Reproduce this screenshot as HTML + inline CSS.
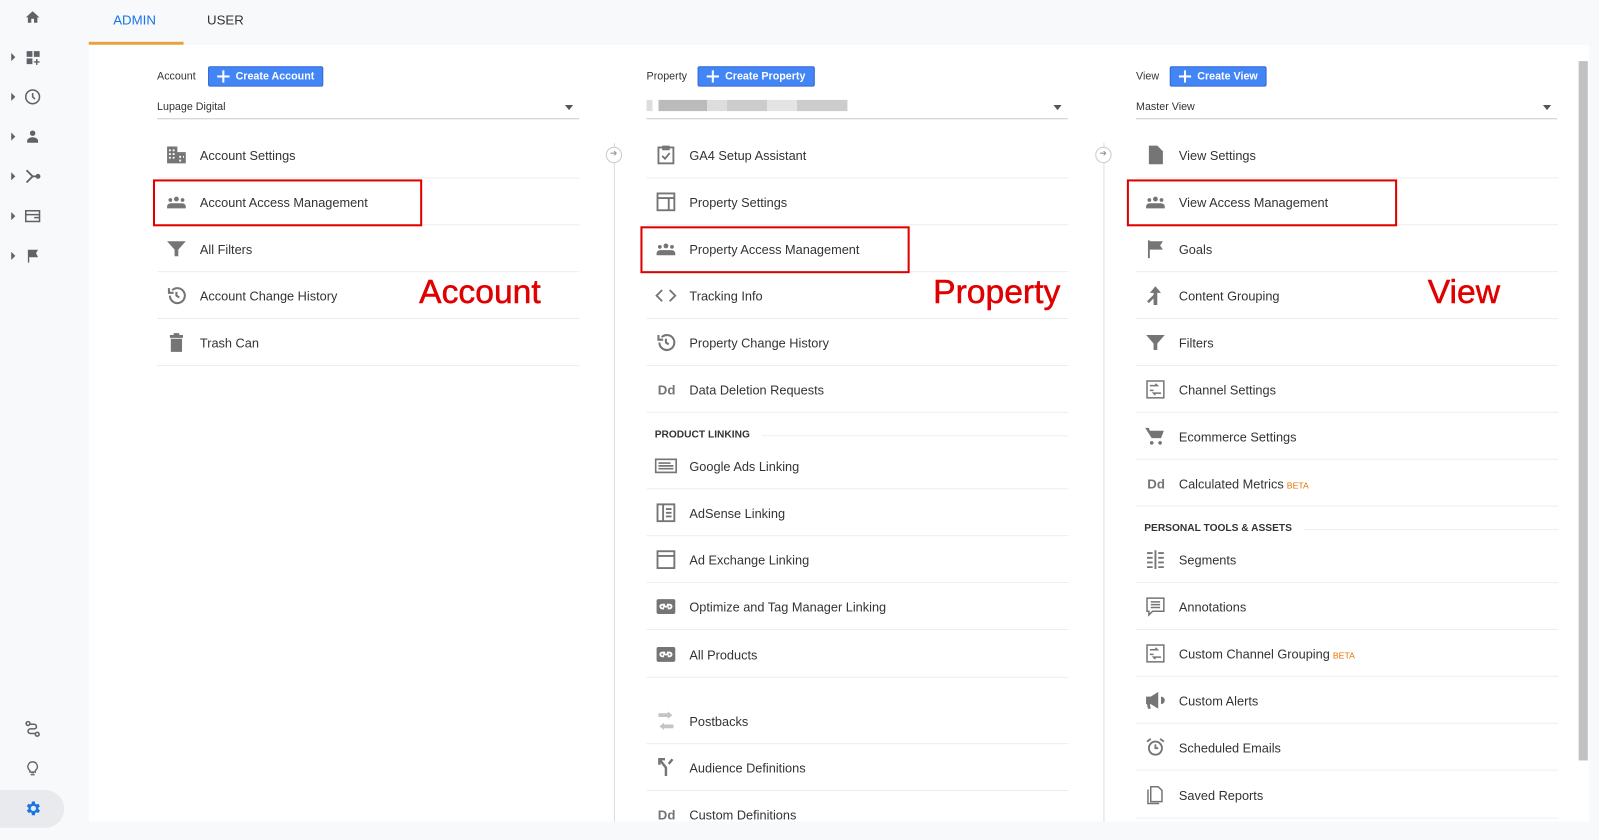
<!DOCTYPE html>
<html><head><meta charset="utf-8">
<style>
*{margin:0;padding:0;box-sizing:border-box}
html,body{width:1599px;height:840px;overflow:hidden;background:#f1f3f4;font-family:"Liberation Sans",Arial,sans-serif}
#w{position:absolute;left:0;top:0;width:1568px;height:824px;transform:scale(1.0198,1.0194);transform-origin:0 0;background:#f8f9fa}
.a{position:absolute}
.side{left:0;top:0;width:87px;height:824px;background:#f8f9fa}
.tri{position:absolute;left:11px;width:0;height:0;border-left:4px solid #5f6368;border-top:4px solid transparent;border-bottom:4px solid transparent}
.panel{left:87px;top:44px;width:1471px;height:762px;background:#fff}
.lbl{font-size:10.5px;color:#333}
.btn{height:20px;background:#4285f4;border:1px solid #3367d6;border-radius:2px;color:#fff;font-weight:bold;font-size:10.5px;line-height:18px;padding-left:26px;padding-right:8px}
.btn:before{content:"";position:absolute;left:8px;top:8px;width:12px;height:2px;background:#fff}
.btn:after{content:"";position:absolute;left:13px;top:3px;width:2px;height:12px;background:#fff}
.dd{font-size:10.5px;color:#333;border-bottom:1px solid #ccc;height:20px;padding-top:2px}
.dd i{position:absolute;right:6px;top:6px;border-top:5px solid #555;border-left:4px solid transparent;border-right:4px solid transparent}
.row{position:absolute;height:46px;border-bottom:1px solid #eee;font-size:12.5px;color:#333;line-height:48px;padding-left:42px;width:414px}
.row svg{position:absolute;left:8px;top:12px;width:22px;height:22px;fill:#757575}
.beta{font-size:8.5px;color:#e37400;margin-left:3px}
.sec{position:absolute;font-size:10px;font-weight:bold;color:#333;width:406px}
.sec span{background:#fff;padding-right:12px;position:relative;z-index:1}
.sec:after{content:"";position:absolute;left:0;right:0;top:6px;height:1px;background:#eee;z-index:0}
.vl{width:1px;background:#ddd;top:140px;height:666px}
.circ{width:16px;height:16px;border:1px solid #ccc;border-radius:50%;background:#fff;top:144px}
.circ:after{content:"➜";position:absolute;left:3px;top:0px;font-size:9px;color:#999}
.red{border:2px solid #e00000}
.big{color:#e00000;font-size:33px;-webkit-text-stroke:0.5px #e00000}
</style></head><body><div id="w">
<div class="a side">
<svg class="a" style="left:24px;top:9px" width="16" height="16" viewBox="0 0 24 24" fill="#5f6368"><path d="M10 20v-6h4v6h5v-8h3L12 3 2 12h3v8z"/></svg>
<i class="tri" style="top:52px"></i>
<svg class="a" style="left:24px;top:48px" width="17" height="17" viewBox="0 0 24 24" fill="#5f6368"><path d="M3 3h8v8H3zM13 3h8v8h-8zM3 13h8v8H3zM16 14h2v3h3v2h-3v3h-2v-3h-3v-2h3z"/></svg>
<i class="tri" style="top:91px"></i>
<svg class="a" style="left:23px;top:86px" width="18" height="18" viewBox="0 0 24 24" fill="none" stroke="#5f6368" stroke-width="2"><circle cx="12" cy="12" r="9"/><path d="M12 7v5l3 3"/></svg>
<i class="tri" style="top:130px"></i>
<svg class="a" style="left:24px;top:126px" width="16" height="16" viewBox="0 0 24 24" fill="#5f6368"><circle cx="12" cy="7" r="4"/><path d="M4 21v-3c0-3 5-5 8-5s8 2 8 5v3z"/></svg>
<i class="tri" style="top:169px"></i>
<svg class="a" style="left:23px;top:164px" width="18" height="18" viewBox="0 0 24 24" fill="none" stroke="#5f6368" stroke-width="2.4"><path d="M4 4l8 8-8 8M12 12h7"/><circle cx="19" cy="12" r="2" fill="#5f6368"/></svg>
<i class="tri" style="top:208px"></i>
<svg class="a" style="left:23px;top:203px" width="18" height="18" viewBox="0 0 24 24" fill="none" stroke="#5f6368" stroke-width="2"><rect x="3" y="5" width="18" height="14"/><path d="M3 10h18M14 14h7"/></svg>
<i class="tri" style="top:247px"></i>
<svg class="a" style="left:24px;top:243px" width="16" height="16" viewBox="0 0 24 24" fill="#5f6368"><path d="M5 3h2v19H5zM7 3h13l-3 5 3 6H7z"/></svg>
<svg class="a" style="left:23px;top:706px" width="18" height="18" viewBox="0 0 24 24" fill="none" stroke="#5f6368" stroke-width="2"><circle cx="6" cy="5" r="2.5"/><circle cx="18" cy="19" r="2.5"/><path d="M8 6h6a3 3 0 0 1 0 6H9a3 3 0 0 0 0 6h6"/></svg>
<svg class="a" style="left:24px;top:745px" width="16" height="18" viewBox="0 0 24 24" fill="none" stroke="#5f6368" stroke-width="2"><path d="M9 21h6M10 18h4M12 2a7 7 0 0 0-4 12.7V17h8v-2.3A7 7 0 0 0 12 2z"/></svg>
<div class="a" style="left:0;top:775px;width:63px;height:37px;background:#e8eaed;border-radius:0 19px 19px 0"></div>
<svg class="a" style="left:23px;top:784px" width="18" height="18" viewBox="0 0 24 24" fill="#1a73e8"><path d="M19.4 13a7.5 7.5 0 0 0 0-2l2.1-1.6-2-3.5-2.5 1a7 7 0 0 0-1.7-1L15 3h-4l-.4 2.9a7 7 0 0 0-1.7 1l-2.5-1-2 3.5L6.6 11a7.5 7.5 0 0 0 0 2l-2.1 1.6 2 3.5 2.5-1a7 7 0 0 0 1.7 1L11 21h4l.4-2.9a7 7 0 0 0 1.7-1l2.5 1 2-3.5zM13 15.5a3.5 3.5 0 1 1 0-7 3.5 3.5 0 0 1 0 7z"/></svg>
</div>
<div class="a" style="left:111px;top:12px;font-size:13px;color:#1a73e8">ADMIN</div>
<div class="a" style="left:203px;top:12px;font-size:13px;color:#333">USER</div>
<div class="a" style="left:87px;top:41px;width:93px;height:3px;background:#e8a33d"></div>
<div class="a panel"></div>
<div class="a" style="left:1548px;top:60px;width:9px;height:686px;background:#c1c1c1"></div>

<div class="a lbl" style="left:154px;top:69px">Account</div>
<div class="a btn" style="left:204px;top:65px">Create Account</div>
<div class="a dd" style="left:154px;top:97px;width:414px">Lupage Digital<i></i></div>
<div class="a lbl" style="left:634px;top:69px">Property</div>
<div class="a btn" style="left:684px;top:65px">Create Property</div>
<div class="a dd" style="left:634px;top:97px;width:413px"><div class="a" style="left:0;top:1px;width:197px;height:11px;background:linear-gradient(90deg,#ddd 0 3%,#fff 3% 6%,#bbb 6% 30%,#ddd 30% 40%,#ccc 40% 60%,#e4e4e4 60% 75%,#ccc 75% 100%)"></div><i></i></div>
<div class="a lbl" style="left:1114px;top:69px">View</div>
<div class="a btn" style="left:1147px;top:65px">Create View</div>
<div class="a dd" style="left:1114px;top:97px;width:413px">Master View<i></i></div>

<div class="a vl" style="left:602px"></div><div class="a circ" style="left:594px"></div>
<div class="a vl" style="left:1082px"></div><div class="a circ" style="left:1074px"></div>

<!-- Account column -->
<div class="row" style="left:154px;top:129px"><svg viewBox="0 0 24 24"><path d="M2 3h11v18H2zM13 9h9v12h-9z"/><path fill="#fff" d="M4 6h2v2H4zM8 6h2v2H8zM4 10h2v2H4zM8 10h2v2H8zM4 14h2v2H4zM8 14h2v2H8zM15 13h2v2h-2zM19 13h1v2h-1zM15 17h2v2h-2z"/></svg>Account Settings</div>
<div class="row" style="left:154px;top:175px"><svg viewBox="0 0 24 24"><circle cx="12" cy="9" r="2.6"/><circle cx="5.5" cy="10" r="2"/><circle cx="18.5" cy="10" r="2"/><path d="M2 17c0-2 2-3.5 4-3.5h12c2 0 4 1.5 4 3.5v2H2z"/></svg>Account Access Management</div>
<div class="row" style="left:154px;top:221px"><svg viewBox="0 0 24 24"><path d="M2 4h20l-8 9v7h-4v-7z"/></svg>All Filters</div>
<div class="row" style="left:154px;top:267px"><svg viewBox="0 0 24 24" style="fill:none" stroke="#757575" stroke-width="2.2"><path d="M5 12a8 8 0 1 0 2.5-5.8"/><path d="M4 4v5h5"/><path d="M12 8v4l3 2"/></svg>Account Change History</div>
<div class="row" style="left:154px;top:313px"><svg viewBox="0 0 24 24"><path d="M5 4h14v3H5zM9 2h6v2H9zM6 8h12v14H6z"/></svg>Trash Can</div>
<div class="a red" style="left:150px;top:176px;width:264px;height:46px"></div>
<div class="a big" style="left:411px;top:267px">Account</div>

<!-- Property column -->
<div class="row" style="left:634px;top:129px"><svg viewBox="0 0 24 24" style="fill:none" stroke="#757575" stroke-width="2"><rect x="4" y="4" width="16" height="17"/><path d="M9 3h6v3H9zM8 13l3 3 5-6"/></svg>GA4 Setup Assistant</div>
<div class="row" style="left:634px;top:175px"><svg viewBox="0 0 24 24" style="fill:none" stroke="#757575" stroke-width="2"><rect x="3" y="3" width="18" height="18"/><path d="M3 8h18M15 8v13"/></svg>Property Settings</div>
<div class="row" style="left:634px;top:221px"><svg viewBox="0 0 24 24"><circle cx="12" cy="9" r="2.6"/><circle cx="5.5" cy="10" r="2"/><circle cx="18.5" cy="10" r="2"/><path d="M2 17c0-2 2-3.5 4-3.5h12c2 0 4 1.5 4 3.5v2H2z"/></svg>Property Access Management</div>
<div class="row" style="left:634px;top:267px"><svg viewBox="0 0 24 24" style="fill:none" stroke="#757575" stroke-width="2"><path d="M8 6l-6 6 6 6M16 6l6 6-6 6"/></svg>Tracking Info</div>
<div class="row" style="left:634px;top:313px"><svg viewBox="0 0 24 24" style="fill:none" stroke="#757575" stroke-width="2.2"><path d="M5 12a8 8 0 1 0 2.5-5.8"/><path d="M4 4v5h5"/><path d="M12 8v4l3 2"/></svg>Property Change History</div>
<div class="row" style="left:634px;top:359px"><span style="position:absolute;left:11px;font-weight:bold;color:#757575;font-size:13px">Dd</span>Data Deletion Requests</div>
<div class="sec" style="left:642px;top:421px"><span>PRODUCT LINKING</span></div>
<div class="row" style="left:634px;top:434px"><svg viewBox="0 0 24 24" style="fill:none" stroke="#757575" stroke-width="1.8"><rect x="1" y="5" width="22" height="14"/><path d="M4 9h13M4 12h16M4 15h16"/></svg>Google Ads Linking</div>
<div class="row" style="left:634px;top:480px"><svg viewBox="0 0 24 24" style="fill:none" stroke="#757575" stroke-width="2"><rect x="3" y="3" width="18" height="18"/><path d="M9 3v18M12 8h6M12 12h6M12 16h6"/></svg>AdSense Linking</div>
<div class="row" style="left:634px;top:526px"><svg viewBox="0 0 24 24" style="fill:none" stroke="#757575" stroke-width="2"><rect x="3" y="3" width="18" height="18"/><path d="M3 8h18"/></svg>Ad Exchange Linking</div>
<div class="row" style="left:634px;top:572px"><svg viewBox="0 0 24 24"><rect x="2" y="4" width="20" height="16" rx="2"/><path fill="none" stroke="#fff" stroke-width="2" d="M10 14H8a2 2 0 0 1 0-4h3M14 14h2a2 2 0 0 0 0-4h-3M9 12h6"/></svg>Optimize and Tag Manager Linking</div>
<div class="row" style="left:634px;top:619px"><svg viewBox="0 0 24 24"><rect x="2" y="4" width="20" height="16" rx="2"/><path fill="none" stroke="#fff" stroke-width="2" d="M10 14H8a2 2 0 0 1 0-4h3M14 14h2a2 2 0 0 0 0-4h-3M9 12h6"/></svg>All Products</div>
<div class="row" style="left:634px;top:684px"><svg viewBox="0 0 24 24" style="fill:#c4c4c4"><path d="M4 4h10v-2l5 4-5 4V8H4zM20 16H10v-2l-5 4 5 4v-2h10z"/></svg>Postbacks</div>
<div class="row" style="left:634px;top:730px"><svg viewBox="0 0 24 24" style="fill:none" stroke="#757575" stroke-width="2.6"><path d="M5 3l7 9v9M19 3l-4 5M5 9V3h6"/></svg>Audience Definitions</div>
<div class="row" style="left:634px;top:776px;border-bottom:none"><span style="position:absolute;left:11px;font-weight:bold;color:#757575;font-size:13px">Dd</span>Custom Definitions</div>
<div class="a red" style="left:628px;top:222px;width:264px;height:46px"></div>
<div class="a big" style="left:915px;top:267px">Property</div>

<!-- View column -->
<div class="row" style="left:1114px;top:129px"><svg viewBox="0 0 24 24"><path d="M5 2h9l6 6v14H5z"/></svg>View Settings</div>
<div class="row" style="left:1114px;top:175px"><svg viewBox="0 0 24 24"><circle cx="12" cy="9" r="2.6"/><circle cx="5.5" cy="10" r="2"/><circle cx="18.5" cy="10" r="2"/><path d="M2 17c0-2 2-3.5 4-3.5h12c2 0 4 1.5 4 3.5v2H2z"/></svg>View Access Management</div>
<div class="row" style="left:1114px;top:221px"><svg viewBox="0 0 24 24"><path d="M4 3h2v19H4zM6 4h14l-3 4.5 3 4.5H6z"/></svg>Goals</div>
<div class="row" style="left:1114px;top:267px"><svg viewBox="0 0 24 24"><path d="M12 2l6 7h-4v13h-4v-7l-5 5-2-2 7-7V9H6z"/></svg>Content Grouping</div>
<div class="row" style="left:1114px;top:313px"><svg viewBox="0 0 24 24"><path d="M2 4h20l-8 9v7h-4v-7z"/></svg>Filters</div>
<div class="row" style="left:1114px;top:359px"><svg viewBox="0 0 24 24" style="fill:none" stroke="#757575" stroke-width="1.6"><rect x="3" y="3" width="18" height="18"/><path d="M6 8h8l-2-2M18 16h-8l2 2M6 13h4"/></svg>Channel Settings</div>
<div class="row" style="left:1114px;top:405px"><svg viewBox="0 0 24 24"><path d="M1 3h4l1 3h15l-3 8H8zM8 17a2 2 0 1 0 0.01 0zM17 17a2 2 0 1 0 0.01 0z"/></svg>Ecommerce Settings</div>
<div class="row" style="left:1114px;top:451px"><span style="position:absolute;left:11px;font-weight:bold;color:#757575;font-size:13px">Dd</span>Calculated Metrics<span class="beta">BETA</span></div>
<div class="sec" style="left:1122px;top:513px"><span>PERSONAL TOOLS &amp; ASSETS</span></div>
<div class="row" style="left:1114px;top:526px"><svg viewBox="0 0 24 24" style="fill:none" stroke="#757575" stroke-width="2"><path d="M12 2v20M3 5h6M3 10h6M3 15h6M3 20h6M15 5h6M15 10h6M15 15h6M15 20h6"/></svg>Segments</div>
<div class="row" style="left:1114px;top:572px"><svg viewBox="0 0 24 24" style="fill:none" stroke="#757575" stroke-width="1.6"><path d="M3 3h18v14H9l-4 4v-4H3z"/><path d="M7 7h10M7 10h10M7 13h10"/></svg>Annotations</div>
<div class="row" style="left:1114px;top:618px"><svg viewBox="0 0 24 24" style="fill:none" stroke="#757575" stroke-width="1.6"><rect x="3" y="3" width="18" height="18"/><path d="M6 8h8l-2-2M18 16h-8l2 2M6 13h4"/></svg>Custom Channel Grouping<span class="beta">BETA</span></div>
<div class="row" style="left:1114px;top:664px"><svg viewBox="0 0 24 24"><path d="M2 8h5l8-5v18l-8-5H6l1 5H4l-1-5H2zM18 8a4 4 0 0 1 0 8z"/></svg>Custom Alerts</div>
<div class="row" style="left:1114px;top:710px"><svg viewBox="0 0 24 24" style="fill:none" stroke="#757575" stroke-width="2"><circle cx="12" cy="13" r="7"/><path d="M12 9v4h3M3 6l4-3M21 6l-4-3"/></svg>Scheduled Emails</div>
<div class="row" style="left:1114px;top:757px"><svg viewBox="0 0 24 24" style="fill:none" stroke="#757575" stroke-width="1.6"><path d="M7 3h8l4 4v12H7zM4 6v15h12"/></svg>Saved Reports</div>
<div class="a red" style="left:1105px;top:176px;width:265px;height:46px"></div>
<div class="a big" style="left:1400px;top:267px">View</div>
</div></body></html>
